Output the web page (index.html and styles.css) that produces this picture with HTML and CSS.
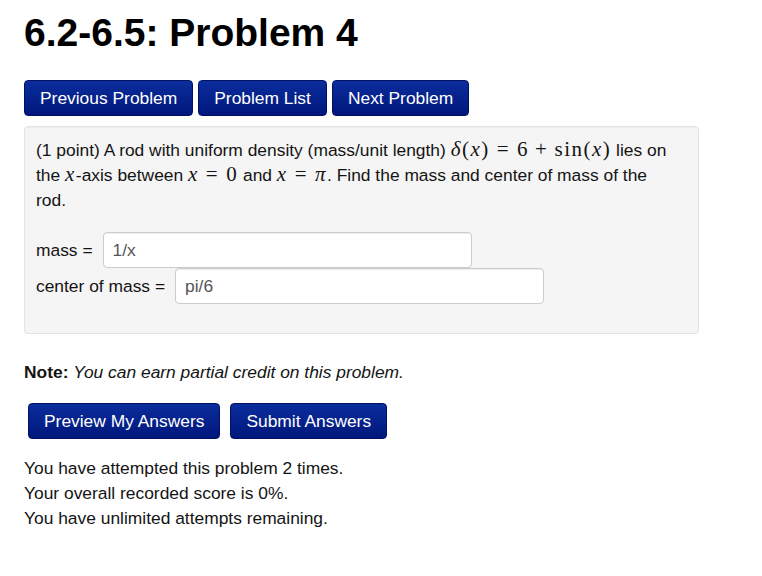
FILE: index.html
```html
<!DOCTYPE html>
<html lang="en">
<head>
<meta charset="utf-8">
<title>6.2-6.5: Problem 4</title>
<link rel="stylesheet" href="styles.css">
</head>
<body>
<div class="page">
  <h1 class="title">6.2-6.5: Problem 4</h1>
  <div class="nav">
    <button class="btn">Previous Problem</button>
    <button class="btn">Problem List</button>
    <button class="btn">Next Problem</button>
  </div>
  <div class="problem">
    <p class="statement">(1 point) A rod with uniform density (mass/unit length) <span class="math"><span class="mi">δ</span>(<span class="mi">x</span>)<span class="rel">=</span>6<span class="bin">+</span>sin(<span class="mi">x</span>)</span> lies on the <span class="math"><span class="mi">x</span></span>-axis between <span class="math"><span class="mi">x</span><span class="rel">=</span>0</span> and <span class="math"><span class="mi">x</span><span class="rel">=</span><span class="mi">π</span></span>. Find the mass and center of mass of the rod.</p>
    <div class="answers">
      <div class="answer-row"><span class="label">mass =</span><input class="field" type="text" value="1/x"></div>
      <div class="answer-row"><span class="label">center of mass =</span><input class="field" type="text" value="pi/6"></div>
    </div>
  </div>
  <p class="note"><b>Note:</b> <i>You can earn partial credit on this problem.</i></p>
  <div class="submit">
    <button class="btn">Preview My Answers</button>
    <button class="btn">Submit Answers</button>
  </div>
  <div class="status">
    <div>You have attempted this problem 2 times.</div>
    <div>Your overall recorded score is 0%.</div>
    <div>You have unlimited attempts remaining.</div>
  </div>
</div>
</body>
</html>
```
FILE: styles.css
```css
html, body {
  margin: 0;
  padding: 0;
  background: #ffffff;
}
body {
  font-family: "Liberation Sans", Arial, sans-serif;
  font-size: 17.4px;
  color: #141414;
}
.page {
  padding: 0 24px;
}
.title {
  margin: 11px 0 25px 0;
  font-size: 39px;
  line-height: 44px;
  font-weight: bold;
  color: #000;
}
.nav {
  display: flex;
  gap: 5px;
  margin-bottom: 10px;
}
.btn {
  font-family: "Liberation Sans", Arial, sans-serif;
  font-size: 17.4px;
  line-height: 22px;
  height: 36px;
  padding: 6px 15px;
  color: #ffffff;
  background: linear-gradient(#0b2d9c, #00177c);
  border: 1px solid #001062;
  border-radius: 4px;
  cursor: pointer;
}
.problem {
  width: 675px;
  box-sizing: border-box;
  background: #f5f5f5;
  border: 1px solid #e3e3e3;
  border-radius: 4px;
  padding: 11px 20px 29px 11px;
  box-shadow: inset 0 1px 1px rgba(0,0,0,0.04);
}
.statement {
  margin: 0 0 19px 0;
  line-height: 25px;
}
.math {
  font-family: "Liberation Serif", "Times New Roman", serif;
  font-size: 21px;
  line-height: 1;
  letter-spacing: 1.5px;
  white-space: nowrap;
}
.mi {
  font-style: italic;
}
.rel {
  margin: 0 7px;
}
.bin {
  margin: 0 6px;
}
.answers {
  display: flex;
  flex-direction: column;
}
.answer-row {
  display: flex;
  align-items: center;
  height: 36px;
}
.label {
  margin-right: 10px;
}
.field {
  width: 369px;
  height: 36px;
  box-sizing: border-box;
  border: 1px solid #cccccc;
  border-radius: 4px;
  padding: 0 9px;
  font-family: "Liberation Sans", Arial, sans-serif;
  font-size: 17.4px;
  color: #555555;
  background: #ffffff;
  box-shadow: inset 0 1px 1px rgba(0,0,0,0.075);
}
.note {
  margin: 26px 0 18px 0;
  line-height: 25px;
}
.note i {
  color: #141414;
}
.submit {
  display: flex;
  gap: 10px;
  padding-left: 4px;
}
.status {
  margin-top: 17px;
  line-height: 25px;
}
```
